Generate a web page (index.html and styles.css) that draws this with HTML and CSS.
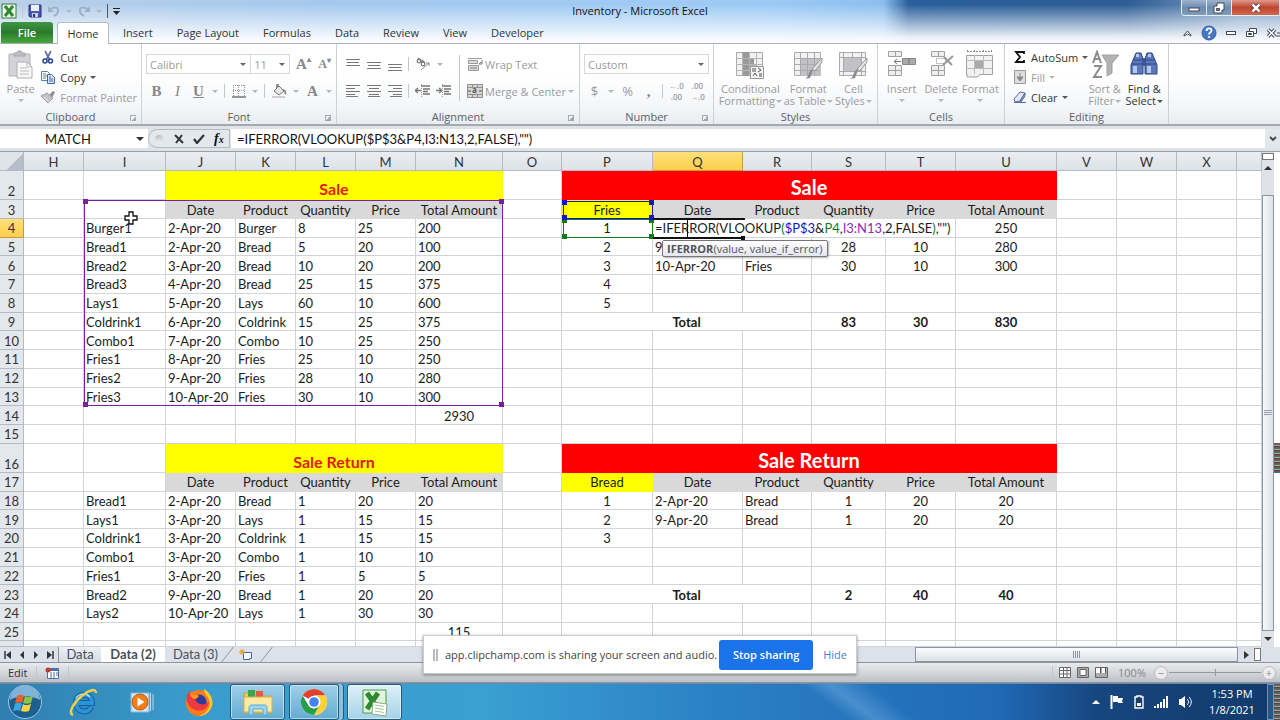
FILE: index.html
```
<!DOCTYPE html>
<html lang="en">
<head>
    <meta charset="UTF-8" />
    <meta name="viewport" content="width=device-width,initial-scale=1" />
    <title>Inventory - Microsoft Excel</title>
    <link rel="stylesheet" href="styles.css">
</head>
<body>
    <header class="top">
        <div class="titlebar">
            <div class="quick">
                <svg width="16" height="16" viewBox="0 0 16 16"><rect x="1" y="1" width="14" height="14" fill="#eef7ea" stroke="#2f7d32"/><path d="M4 3l8 10M12 3L4 13" stroke="#2c8a31" stroke-width="3"/></svg>
                <i class="vbar"></i>
                <button aria-label="Save"><svg width="14" height="14" viewBox="0 0 14 14"><path d="M1 1h12v12H2L1 12z" fill="#4a55b5" stroke="#2b3380"/><path d="M3 1h8v6H3z" fill="#eef1fa"/><path d="M4 9h6v4H4z" fill="#c9cfe6"/><path d="M5 10h2v3H5z" fill="#2b3380"/></svg></button>
                <button aria-label="Undo"><svg width="14" height="12" viewBox="0 0 14 12"><path d="M3 5C6 1 12 2 11 6c0 2-2 4-4 5" fill="none" stroke="#9fb0c6" stroke-width="2"/><path d="M1 1v6h6z" fill="#9fb0c6"/></svg></button>
                <i class="arr pale"></i>
                <button aria-label="Redo"><svg width="14" height="12" viewBox="0 0 14 12"><path d="M11 5C8 1 2 2 3 6c0 2 2 4 4 5" fill="none" stroke="#9fb0c6" stroke-width="2"/><path d="M13 1v6H7z" fill="#9fb0c6"/></svg></button>
                <i class="arr pale"></i>
                <i class="vbar dark"></i>
                <button aria-label="Customize toolbar"><svg width="7" height="7" viewBox="0 0 7 7"><path d="M0 0h7v1H0zM0 3h7L3.500 7z" fill="#222"/></svg></button>
            </div>
            <h1>Inventory - Microsoft Excel</h1>
            <div class="winbtns">
                <button aria-label="Minimize"><svg width="12" height="8" viewBox="0 0 12 8"><rect x="1" y="4" width="10" height="3" fill="#fff" stroke="#445"/></svg></button>
                <button aria-label="Restore"><svg width="12" height="12" viewBox="0 0 12 12"><path d="M4 1h7v7H9v3H1V4h3z" fill="#fff" stroke="#445"/><path d="M3.500 6.500h3v2h-3z" fill="#889" stroke="#445"/></svg></button>
                <button class="close" aria-label="Close"><svg width="12" height="10" viewBox="0 0 12 10"><path d="M2.500 1.500l7 7M9.500 1.500l-7 7" stroke="#522" stroke-width="4"/><path d="M2.500 1.500l7 7M9.500 1.500l-7 7" stroke="#fff" stroke-width="2.500"/></svg></button>
            </div>
        </div>
        <nav class="tabs">
            <button class="file">File</button>
            <button class="active">Home</button>
            <button>Insert</button>
            <button>Page Layout</button>
            <button>Formulas</button>
            <button>Data</button>
            <button>Review</button>
            <button>View</button>
            <button>Developer</button>
            <span class="help">
                <button aria-label="Minimize ribbon"><svg width="9" height="8" viewBox="0 0 9 8"><path d="M1 6l3.500-4L8 6v1L4.500 5 1 7z" fill="#fff" stroke="#445"/></svg></button>
                <button aria-label="Help"><svg width="16" height="16" viewBox="0 0 16 16"><circle cx="8" cy="8" r="7" fill="#4676c4" stroke="#3460a8"/><path d="M5.500 6c0-3.500 5-3.500 5-.5 0 2-2.500 2-2.500 4" fill="none" stroke="#fff" stroke-width="1.800"/><circle cx="8" cy="12" r="1.100" fill="#fff"/></svg></button>
                <button aria-label="Minimize workbook"><svg width="10" height="6" viewBox="0 0 10 6"><rect x=".5" y="1.500" width="9" height="3" fill="#fff" stroke="#445"/></svg></button>
                <button aria-label="Restore workbook"><svg width="12" height="11" viewBox="0 0 12 11"><path d="M4.500 1.500h7v5h-3v3h-7v-5h3z" fill="#fff" stroke="#445"/><path d="M3.500 6.500h3v1h-3zM4.500 4.500h4v2" fill="none" stroke="#445"/></svg></button>
                <button aria-label="Close workbook"><svg width="14" height="10" viewBox="0 0 14 10"><path d="M2 1.500l7 7M9 1.500l-7 7" stroke="#445" stroke-width="3.500"/><path d="M2 1.500l7 7M9 1.500l-7 7" stroke="#fff" stroke-width="1.500"/><path d="M10 8h4M11 5h3" stroke="#445"/></svg></button>
            </span>
        </nav>
    </header>

    <section class="ribbon">
        <div class="group clipboard">
            <div class="tools">
                <button class="big off">
                    <svg width="28" height="30" viewBox="0 0 28 30"><path d="M2 4h21v22H2z" fill="#d3d3d6" stroke="#b4b4b8"/><path d="M7 6V3h3c0-3 5-3 5 0h3v3z" fill="#bdbdc2" stroke="#a5a5aa"/><path d="M10 12h10l5 5v11H10z" fill="#f7f7f8" stroke="#b0b0b4"/><path d="M20 12v5h5M13 18h7M13 21h9M13 24h9" fill="none" stroke="#bbb"/></svg>
                    <span>Paste</span><i class="arr pale"></i>
                </button>
                <div class="stack">
                    <button><svg width="16" height="16" viewBox="0 0 16 16"><path d="M5 2l5 9M11 2L6 11" stroke="#5b6ea8" stroke-width="1.600"/><circle cx="5" cy="12" r="2" fill="none" stroke="#2d4796" stroke-width="1.600"/><circle cx="10.500" cy="12" r="2" fill="none" stroke="#2d4796" stroke-width="1.600"/></svg>Cut</button>
                    <button><svg width="16" height="16" viewBox="0 0 16 16"><path d="M1.500 2.500h6l2 2v7h-8z" fill="#fff" stroke="#5c7fb5"/><path d="M3 5h3M3 7h4M3 9h3" stroke="#5c7fb5"/><path d="M7.500 5.500h4l3 3v6h-7z" fill="#dce8f8" stroke="#3665a8"/><path d="M9 8h2M9 10h4M9 12h4" stroke="#3665a8"/></svg>Copy<i class="arr"></i></button>
                    <button class="off"><svg width="16" height="16" viewBox="0 0 16 16"><path d="M9 6l4-4 2 1-3 6z" fill="#8e8e92"/><path d="M1 7l6-3 6 5-5 5z" fill="#c4c4c8" stroke="#a0a0a4"/><path d="M4 8l5 5" stroke="#eee"/></svg>Format Painter</button>
                </div>
            </div>
            <footer>Clipboard<i class="launch"></i></footer>
        </div>

        <div class="group font">
            <div class="tools rows">
                <div class="line">
                    <label class="combo face"><select aria-label="Font"><option>Calibri</option></select></label>
                    <label class="combo size"><select aria-label="Font size"><option>11</option></select></label>
                    <button class="off serif grow">A<sup>▴</sup></button>
                    <button class="off serif shrink">A<sup>▾</sup></button>
                </div>
                <div class="line">
                    <button class="off serif"><b>B</b></button>
                    <button class="off serif"><em>I</em></button>
                    <button class="off serif"><u>U</u></button>
                    <i class="arr pale"></i><i class="vbar"></i>
                    <button class="off" aria-label="Borders"><svg width="14" height="14" viewBox="0 0 14 14"><path d="M1.500 1v12M6.500 1v12M12.500 1v12M1 1.500h12M1 6.500h12" stroke="#999" stroke-dasharray="1 1"/><path d="M0 13h14" stroke="#777" stroke-width="1.500"/></svg></button>
                    <i class="arr pale"></i><i class="vbar"></i>
                    <button class="off" aria-label="Fill color"><svg width="16" height="15" viewBox="0 0 16 15"><path d="M3 7l5-5 5 5-5 4z" fill="#e6e6e6" stroke="#777"/><path d="M6 4V1h2M12 6c2 0 3 2 2 4" fill="none" stroke="#777" stroke-width="1.500"/><path d="M1 13h13" stroke="#d0d0d0" stroke-width="2"/></svg></button>
                    <i class="arr pale"></i>
                    <button class="off serif">A</button>
                    <i class="arr pale"></i>
                </div>
            </div>
            <footer>Font<i class="launch"></i></footer>
        </div>

        <div class="group align">
            <div class="tools">
                <div class="rows">
                    <div class="line">
                        <button class="off" aria-label="Top align"><svg width="14" height="14" viewBox="0 0 14 14"><path d="M0 2.500h14M1 5.500h12M0 8.500h14" stroke="#777"/></svg></button>
                        <button class="off" aria-label="Middle align"><svg width="14" height="14" viewBox="0 0 14 14"><path d="M0 5.500h14M1 8.500h12M0 11.500h14" stroke="#777"/></svg></button>
                        <button class="off" aria-label="Bottom align"><svg width="14" height="14" viewBox="0 0 14 14"><path d="M0 7.500h14M1 10.500h12M0 13.500h14" stroke="#777"/></svg></button>
                        <i class="vbar"></i>
                        <button class="off" aria-label="Orientation"><svg width="16" height="16" viewBox="0 0 16 16"><circle cx="4" cy="5" r="1.800" fill="none" stroke="#777" stroke-width="1.200"/><path d="M3 2l4 4M7 4l3 3" stroke="#777" stroke-width="1.200"/><circle cx="8" cy="8" r="1.800" fill="none" stroke="#777" stroke-width="1.200"/><path d="M6 14l8-7M11 7h3v3" fill="none" stroke="#888"/></svg></button>
                        <i class="arr pale"></i>
                    </div>
                    <div class="line">
                        <button class="off" aria-label="Align left"><svg width="14" height="12" viewBox="0 0 14 12"><path d="M0 .5h14M0 3.500h9M0 6.500h14M0 9.500h9M0 11.500h12" stroke="#777"/></svg></button>
                        <button class="off" aria-label="Center"><svg width="14" height="12" viewBox="0 0 14 12"><path d="M0 .5h14M2 3.500h10M0 6.500h14M2 9.500h10M1 11.500h12" stroke="#777"/></svg></button>
                        <button class="off" aria-label="Align right"><svg width="14" height="12" viewBox="0 0 14 12"><path d="M0 .5h14M5 3.500h9M0 6.500h14M5 9.500h9M2 11.500h12" stroke="#777"/></svg></button>
                        <i class="vbar"></i>
                        <button class="off" aria-label="Decrease indent"><svg width="15" height="14" viewBox="0 0 15 14"><path d="M6 2h9M8 5h7M8 7.500h5M8 10h7M0 6.500h6M3 4L0 6.500 3 9" fill="none" stroke="#777" stroke-width="1.300"/><path d="M6.500 0v14" stroke="#999" stroke-dasharray="1 1"/></svg></button>
                        <button class="off" aria-label="Increase indent"><svg width="15" height="14" viewBox="0 0 15 14"><path d="M6 2h9M8 5h7M8 7.500h5M8 10h7M0 6.500h6M3 4l3 2.500L3 9" fill="none" stroke="#777" stroke-width="1.300"/><path d="M6.500 0v14" stroke="#999" stroke-dasharray="1 1"/></svg></button>
                    </div>
                </div>
                <i class="vbar tall"></i>
                <div class="rows wrapcol">
                    <div class="line"><button class="off"><svg width="16" height="15" viewBox="0 0 16 15"><path d="M1 1.500h14M1.500 3.500h9v3h-9zM1.500 8.500h10v5h-10z" fill="#ddd" stroke="#999"/><path d="M15 3v4h-3l2-2M3 11h7" fill="none" stroke="#777"/></svg>Wrap Text</button></div>
                    <div class="line"><button class="off"><svg width="16" height="14" viewBox="0 0 16 14"><path d="M.5.5h15v13H.5zM.5 3.500h15M.5 10.500h15M5.500.5v3M10.500.5v3M5.500 10.500v3M10.500 10.500v3" fill="#d6d6d6" stroke="#909090"/><path d="M1 7h3M15 7h-3" stroke="#555"/><text x="5" y="9" font-size="8" font-weight="bold" fill="#555">a</text></svg>Merge &amp; Center<i class="arr pale"></i></button></div>
                </div>
            </div>
            <footer>Alignment<i class="launch"></i></footer>
        </div>

        <div class="group number">
            <div class="tools rows">
                <div class="line"><label class="combo fmt"><select aria-label="Number format"><option>Custom</option></select></label></div>
                <div class="line">
                    <button class="off big-sign">$</button><i class="arr pale"></i>
                    <button class="off big-sign">%</button>
                    <button class="off serif comma">,</button>
                    <i class="vbar"></i>
                    <button class="off dec"><span>←.0</span><span>.00</span></button>
                    <button class="off dec"><span>.00</span><span>→.0</span></button>
                </div>
            </div>
            <footer>Number<i class="launch"></i></footer>
        </div>

        <div class="group styles">
            <div class="tools">
                <button class="big off w66">
                    <svg width="30" height="30" viewBox="0 0 30 30"><path d="M1.500 2.500h26v23h-26z" fill="#f2f2f2" stroke="#aaa"/><path d="M8 2h6v24H8zM14 9h5v5h-5z" fill="#999"/><path d="M14 14h7v6h-7z" fill="#b5b5b5"/><path d="M1 8.500h26M1 14.500h26M1 20.500h26M7.500 2v24M14.500 2v24M21.500 2v24" stroke="#b5b5b5"/><path d="M15.500 16.500h13v12h-13z" fill="#f4f4f4" stroke="#999"/><path d="M18 18v4M20 18v4M23 18l3 2-3 2M18 26l2-3 2 3M24 24h3M24 26h3" fill="none" stroke="#555"/></svg>
                    <span>Conditional</span><span>Formatting<i class="arr pale"></i></span>
                </button>
                <button class="big off w50">
                    <svg width="30" height="30" viewBox="0 0 30 30"><path d="M1.500 2.500h26v23h-26z" fill="#f2f2f2" stroke="#aaa"/><path d="M8 8h20v18H8z" fill="#c2c2c6"/><path d="M1 8.500h26M1 14.500h26M1 20.500h26M7.500 2v24M14.500 2v24M21.500 2v24" stroke="#aaa"/><path d="M29 9l-9 11-3 8-5 1c3-1 3-5 5-8z" fill="#8c8c90"/><path d="M29 8v4l-7 9-3-2z" fill="#e2e2e4" stroke="#999"/></svg>
                    <span>Format</span><span>as Table<i class="arr pale"></i></span>
                </button>
                <button class="big off w40">
                    <svg width="30" height="30" viewBox="0 0 30 30"><path d="M1.500 2.500h26v23h-26z" fill="#f2f2f2" stroke="#aaa"/><path d="M6 7h18v14H6z" fill="#c2c2c6"/><path d="M1 7.500h26M1 21.500h26M5.500 2v24M14.500 2v5M23.500 2v24" stroke="#aaa"/><path d="M29 9l-9 11-3 8-5 1c3-1 3-5 5-8z" fill="#8c8c90"/><path d="M29 8v4l-7 9-3-2z" fill="#e2e2e4" stroke="#999"/></svg>
                    <span>Cell</span><span>Styles<i class="arr pale"></i></span>
                </button>
            </div>
            <footer>Styles</footer>
        </div>

        <div class="group cells">
            <div class="tools">
                <button class="big off w40">
                    <svg width="30" height="30" viewBox="0 0 30 30"><path d="M1.500 1.500h13v5h-13zM8.500 1v5M1.500 15.500h13v10h-13zM8.500 15v10M1 20.500h13" fill="#eee" stroke="#a0a0a4"/><path d="M15.500 8.500h13v6h-13z" fill="#aaa" stroke="#888"/><path d="M22 8v6M7 11.500h7M10 9l-3 2.500 3 2.500" fill="none" stroke="#777"/></svg>
                    <span>Insert</span><i class="arr pale"></i>
                </button>
                <button class="big off w40">
                    <svg width="26" height="30" viewBox="0 0 26 30"><path d="M3.500 1.500h13v5h-13zM10.500 1v5M3.500 15.500h13v10h-13zM10.500 15v10M3 20.500h13" fill="#eee" stroke="#a0a0a4"/><path d="M8.500 8.500h9v5h-9z" fill="#fff" stroke="#888" stroke-dasharray="1 1"/><path d="M16 7l8 8M25 6l-10 9" stroke="#999" stroke-width="2"/></svg>
                    <span>Delete</span><i class="arr pale"></i>
                </button>
                <button class="big off w40">
                    <svg width="30" height="30" viewBox="0 0 30 30"><path d="M1.500 5.500h26v19h-26z" fill="#f2f2f2" stroke="#a0a0a4"/><path d="M10 10h8v9h-8z" fill="#aaa"/><path d="M1 10.500h26M1 18.500h26M9.500 5v19M18.500 5v19" stroke="#bbb"/><path d="M2 1.500h24M2.500 0v3M9.500 0v3M18.500 0v3M26.500 0v3" stroke="#888" stroke-dasharray="2 1"/><path d="M2 24v3h10l4-3" fill="#eee" stroke="#a0a0a4"/></svg>
                    <span>Format</span><i class="arr pale"></i>
                </button>
            </div>
            <footer>Cells</footer>
        </div>

        <div class="group editing">
            <div class="tools">
                <div class="stack">
                    <button><svg width="14" height="14" viewBox="0 0 14 14"><path d="M11 4V2H3l4 5-4 5h8v-2" fill="none" stroke="#111" stroke-width="1.800"/></svg>AutoSum<i class="arr"></i></button>
                    <button class="off"><svg width="14" height="14" viewBox="0 0 14 14"><path d="M1.500.5h11v13h-11z" fill="#ddd" stroke="#999"/><path d="M7 3v5M4 7l3 4 3-4z" fill="#888" stroke="#888"/></svg>Fill<i class="arr pale"></i></button>
                    <button><svg width="14" height="14" viewBox="0 0 14 14"><path d="M1 9l6-7 5 1-5 8-5 1z" fill="#dfe7f8" stroke="#5a6c9c"/><path d="M7 11l5-8v3l-4 6zM1 12.500h12" fill="#8fa2cf" stroke="#5a6c9c"/></svg>Clear<i class="arr"></i></button>
                </div>
                <button class="big off w40">
                    <svg width="30" height="30" viewBox="0 0 30 30"><path d="M12 5h17l-7 8v10l-5 3V13z" fill="#b2b2b6" stroke="#a0a0a4"/><path d="M3 13L7 2l4 11M4 9h6M4 16h7L4 27h8" fill="none" stroke="#8c8c90" stroke-width="2"/></svg>
                    <span>Sort &amp;</span><span>Filter<i class="arr pale"></i></span>
                </button>
                <button class="big w40">
                    <svg width="28" height="30" viewBox="0 0 28 30"><path d="M6 3h5l2 6v15H1V15zM17 3h5l5 12v9H15V9z" fill="#5b78ba" stroke="#2b4684"/><path d="M12 8h4v8h-4z" fill="#3c5898"/><path d="M6 4h3v3H6zM18 4h3v3h-3zM3 16h4v7H3zM17 16h4v7h-4z" fill="#b6c8ee"/><path d="M4 10h9M15 10h9M1 14h12M15 14h12" stroke="#2b4684"/></svg>
                    <span>Find &amp;</span><span>Select<i class="arr"></i></span>
                </button>
            </div>
            <footer>Editing</footer>
        </div>
    </section>

    <section class="formulabar">
        <label class="namebox"><input value="MATCH" aria-label="Name box"><i class="arr black"></i></label>
        <div class="fx">
            <i class="knob"></i>
            <button aria-label="Cancel"><svg width="10" height="10" viewBox="0 0 10 10"><path d="M1 1l8 8M8 1L2 9" stroke="#333" stroke-width="2"/></svg></button>
            <button aria-label="Enter"><svg width="12" height="10" viewBox="0 0 12 10"><path d="M1 5l3 4 7-8" fill="none" stroke="#333" stroke-width="2.200"/></svg></button>
            <button class="fn" aria-label="Insert function"><em>f<small>x</small></em></button>
        </div>
        <input class="formula" aria-label="Formula" value='=IFERROR(VLOOKUP($P$3&amp;P4,I3:N13,2,FALSE),"")'>
        <button class="expand" aria-label="Expand formula bar"><svg width="8" height="6" viewBox="0 0 8 6"><path d="M1 1l3 3 3-3" fill="none" stroke="#444" stroke-width="1.800"/></svg></button>
    </section>

    <main class="sheet">
        <div class="grid">
            <table>
                <colgroup>
                    <col class="w24"><col class="w60"><col class="w82"><col class="w70"><col class="w60"><col class="w60"><col class="w60"><col class="w87"><col class="w59"><col class="w91"><col class="w90"><col class="w69"><col class="w74"><col class="w70"><col class="w101"><col class="w60"><col class="w60"><col class="w60"><col>
                </colgroup>
                <thead>
                    <tr><th class="corner"></th><th>H</th><th>I</th><th>J</th><th>K</th><th>L</th><th>M</th><th>N</th><th>O</th><th>P</th><th class="on">Q</th><th>R</th><th>S</th><th>T</th><th>U</th><th>V</th><th>W</th><th>X</th><th></th></tr>
                </thead>
                <tbody>
                    <tr class="tall"><th>2</th><td></td><td></td><td colspan="5" class="yellow">Sale</td><td></td><td colspan="6" class="red">Sale</td><td></td><td></td><td></td><td></td></tr>
                    <tr class="names"><th>3</th><td></td><td></td><td class="g">Date</td><td class="g">Product</td><td class="g">Quantity</td><td class="g">Price</td><td class="g">Total Amount</td><td></td><td class="key">Fries</td><td class="g">Date</td><td class="g">Product</td><td class="g">Quantity</td><td class="g">Price</td><td class="g">Total Amount</td><td></td><td></td><td></td><td></td></tr>
                    <tr><th class="on">4</th><td></td><td>Burger1</td><td>2-Apr-20</td><td>Burger</td><td>8</td><td>25</td><td>200</td><td></td><td>1</td><td colspan="4" class="edit" contenteditable="true" spellcheck="false">=IFERROR(VLOOKUP<span class="gr">(</span><span class="bl">$P$3</span>&amp;<span class="gr">P4</span>,<span class="pu">I3:N13</span>,2,FALSE<span class="gr">)</span>,"")</td><td class="mid">250</td><td></td><td></td><td></td><td></td></tr>
                    <tr><th>5</th><td></td><td>Bread1</td><td>2-Apr-20</td><td>Bread</td><td>5</td><td>20</td><td>100</td><td></td><td>2</td><td>9</td><td></td><td>28</td><td>10</td><td>280</td><td></td><td></td><td></td><td></td></tr>
                    <tr><th>6</th><td></td><td>Bread2</td><td>3-Apr-20</td><td>Bread</td><td>10</td><td>20</td><td>200</td><td></td><td>3</td><td>10-Apr-20</td><td>Fries</td><td>30</td><td>10</td><td>300</td><td></td><td></td><td></td><td></td></tr>
                    <tr><th>7</th><td></td><td>Bread3</td><td>4-Apr-20</td><td>Bread</td><td>25</td><td>15</td><td>375</td><td></td><td>4</td><td></td><td></td><td></td><td></td><td></td><td></td><td></td><td></td><td></td></tr>
                    <tr><th>8</th><td></td><td>Lays1</td><td>5-Apr-20</td><td>Lays</td><td>60</td><td>10</td><td>600</td><td></td><td>5</td><td></td><td></td><td></td><td></td><td></td><td></td><td></td><td></td><td></td></tr>
                    <tr><th>9</th><td></td><td>Coldrink1</td><td>6-Apr-20</td><td>Coldrink</td><td>15</td><td>25</td><td>375</td><td></td><td colspan="3" class="total">Total</td><td class="total">83</td><td class="total">30</td><td class="total">830</td><td></td><td></td><td></td><td></td></tr>
                    <tr><th>10</th><td></td><td>Combo1</td><td>7-Apr-20</td><td>Combo</td><td>10</td><td>25</td><td>250</td><td></td><td></td><td></td><td></td><td></td><td></td><td></td><td></td><td></td><td></td><td></td></tr>
                    <tr><th>11</th><td></td><td>Fries1</td><td>8-Apr-20</td><td>Fries</td><td>25</td><td>10</td><td>250</td><td></td><td></td><td></td><td></td><td></td><td></td><td></td><td></td><td></td><td></td><td></td></tr>
                    <tr><th>12</th><td></td><td>Fries2</td><td>9-Apr-20</td><td>Fries</td><td>28</td><td>10</td><td>280</td><td></td><td></td><td></td><td></td><td></td><td></td><td></td><td></td><td></td><td></td><td></td></tr>
                    <tr><th>13</th><td></td><td>Fries3</td><td>10-Apr-20</td><td>Fries</td><td>30</td><td>10</td><td>300</td><td></td><td></td><td></td><td></td><td></td><td></td><td></td><td></td><td></td><td></td><td></td></tr>
                    <tr><th>14</th><td></td><td></td><td></td><td></td><td></td><td></td><td class="mid">2930</td><td></td><td></td><td></td><td></td><td></td><td></td><td></td><td></td><td></td><td></td><td></td></tr>
                    <tr><th>15</th><td></td><td></td><td></td><td></td><td></td><td></td><td></td><td></td><td></td><td></td><td></td><td></td><td></td><td></td><td></td><td></td><td></td><td></td></tr>
                    <tr class="tall"><th>16</th><td></td><td></td><td colspan="5" class="yellow">Sale Return</td><td></td><td colspan="6" class="red">Sale Return</td><td></td><td></td><td></td><td></td></tr>
                    <tr class="names"><th>17</th><td></td><td></td><td class="g">Date</td><td class="g">Product</td><td class="g">Quantity</td><td class="g">Price</td><td class="g">Total Amount</td><td></td><td class="key">Bread</td><td class="g">Date</td><td class="g">Product</td><td class="g">Quantity</td><td class="g">Price</td><td class="g">Total Amount</td><td></td><td></td><td></td><td></td></tr>
                    <tr><th>18</th><td></td><td>Bread1</td><td>2-Apr-20</td><td>Bread</td><td>1</td><td>20</td><td>20</td><td></td><td>1</td><td>2-Apr-20</td><td>Bread</td><td>1</td><td>20</td><td>20</td><td></td><td></td><td></td><td></td></tr>
                    <tr><th>19</th><td></td><td>Lays1</td><td>3-Apr-20</td><td>Lays</td><td>1</td><td>15</td><td>15</td><td></td><td>2</td><td>9-Apr-20</td><td>Bread</td><td>1</td><td>20</td><td>20</td><td></td><td></td><td></td><td></td></tr>
                    <tr><th>20</th><td></td><td>Coldrink1</td><td>3-Apr-20</td><td>Coldrink</td><td>1</td><td>15</td><td>15</td><td></td><td>3</td><td></td><td></td><td></td><td></td><td></td><td></td><td></td><td></td><td></td></tr>
                    <tr><th>21</th><td></td><td>Combo1</td><td>3-Apr-20</td><td>Combo</td><td>1</td><td>10</td><td>10</td><td></td><td></td><td></td><td></td><td></td><td></td><td></td><td></td><td></td><td></td><td></td></tr>
                    <tr><th>22</th><td></td><td>Fries1</td><td>3-Apr-20</td><td>Fries</td><td>1</td><td>5</td><td>5</td><td></td><td></td><td></td><td></td><td></td><td></td><td></td><td></td><td></td><td></td><td></td></tr>
                    <tr><th>23</th><td></td><td>Bread2</td><td>9-Apr-20</td><td>Bread</td><td>1</td><td>20</td><td>20</td><td></td><td colspan="3" class="total">Total</td><td class="total">2</td><td class="total">40</td><td class="total">40</td><td></td><td></td><td></td><td></td></tr>
                    <tr><th>24</th><td></td><td>Lays2</td><td>10-Apr-20</td><td>Lays</td><td>1</td><td>30</td><td>30</td><td></td><td></td><td></td><td></td><td></td><td></td><td></td><td></td><td></td><td></td><td></td></tr>
                    <tr><th>25</th><td></td><td></td><td></td><td></td><td></td><td></td><td class="mid">115</td><td></td><td></td><td></td><td></td><td></td><td></td><td></td><td></td><td></td><td></td><td></td></tr>
                    <tr class="cut"><th></th><td></td><td></td><td></td><td></td><td></td><td></td><td></td><td></td><td></td><td></td><td></td><td></td><td></td><td></td><td></td><td></td><td></td><td></td></tr>
                </tbody>
            </table>
            <div class="range purple"><i></i><i></i><i></i><i></i></div>
            <div class="range green"><i></i><i></i><i></i><i></i></div>
            <div class="range blue"><i></i><i></i><i></i><i></i></div>
            <div class="active-cell"></div>
            <div class="hint"><b>IFERROR</b>(value, value_if_error)</div>
            <svg class="cursor" width="14" height="14" viewBox="0 0 14 14"><path d="M5 1h4v4h4v4H9v4H5V9H1V5h4z" fill="#fff" stroke="#111" stroke-width="1.300"/></svg>
        </div>
        <div class="vscroll">
            <i class="split"></i>
            <button aria-label="Scroll up"><i class="up"></i></button>
            <div class="thumb"></div>
            <button aria-label="Scroll down"><i class="arr black"></i></button>
        </div>
        <div class="edge"><i class="noise"></i></div>
    </main>

    <section class="sheettabs">
        <div class="steps">
            <button aria-label="First sheet"><svg width="8" height="8" viewBox="0 0 8 8"><path d="M1 0v8" stroke="#333" stroke-width="1.500"/><path d="M7 0v8L2 4z" fill="#333"/></svg></button>
            <button aria-label="Previous sheet"><svg width="8" height="8" viewBox="0 0 8 8"><path d="M6 0v8L2 4z" fill="#333"/></svg></button>
            <button aria-label="Next sheet"><svg width="8" height="8" viewBox="0 0 8 8"><path d="M2 0v8l4-4z" fill="#333"/></svg></button>
            <button aria-label="Last sheet"><svg width="8" height="8" viewBox="0 0 8 8"><path d="M7 0v8" stroke="#333" stroke-width="1.500"/><path d="M1 0v8l5-4z" fill="#333"/></svg></button>
        </div>
        <button class="tab">Data</button>
        <button class="tab current">Data (2)</button>
        <button class="tab slant">Data (3)</button>
        <button class="tab slant add" aria-label="New sheet"><svg width="14" height="12" viewBox="0 0 14 12"><path d="M4.500 3.500h8v6h-2v1h-6z" fill="#f4f8ff" stroke="#4a6496"/><path d="M3 0v6M0 3h6M1 1l4 4M5 1L1 5" stroke="#e0a020"/></svg></button>
        <div class="hscroll">
            <div class="thumb"><i></i></div>
            <button aria-label="Scroll right"><i class="right"></i></button>
            <i class="split"></i>
        </div>
    </section>

    <section class="status">
        <span class="mode">Edit</span>
        <i class="vbar"></i>
        <button aria-label="Record macro"><svg width="15" height="12" viewBox="0 0 15 12"><path d="M2.500 1.500h11v10h-11z" fill="#fff" stroke="#4b6ea8"/><path d="M3 2h11v2H3z" fill="#4b6ea8"/><path d="M5 6h2M8 6h2M11 6h2M5 8h2M8 8h2M11 8h2M5 10h2M8 10h2" stroke="#4b6ea8"/><circle cx="3" cy="3" r="2.500" fill="#c0392b"/></svg></button>
        <i class="vbar"></i>
        <div class="views">
            <i class="vbar"></i>
            <button aria-label="Normal"><svg width="12" height="11" viewBox="0 0 12 11"><path d="M.5.5h11v10H.5zM.5 3.500h11M.5 7h11M4.500.5v10M8 .5v10" fill="#fff" stroke="#666"/></svg></button>
            <button class="pressed" aria-label="Page layout"><svg width="12" height="11" viewBox="0 0 12 11"><path d="M.5.5h11v10H.5z" fill="#aaa" stroke="#666"/><path d="M3 2.500h6v6H3z" fill="#fff" stroke="#666"/></svg></button>
            <button aria-label="Page break preview"><svg width="13" height="11" viewBox="0 0 13 11"><path d="M.5.5h12v10H.5z" fill="#aaa" stroke="#666"/><path d="M1 1h4v5H1zM7 1h3v5H7z" fill="#fff"/><path d="M5.500 0v6M10.500 0v6" stroke="#555"/></svg></button>
            <button class="pct">100%</button>
            <button class="round" aria-label="Zoom out">−</button>
            <input type="range" min="10" max="190" value="100" aria-label="Zoom">
            <button class="round" aria-label="Zoom in">+</button>
        </div>
    </section>

    <footer class="taskbar">
        <button class="orb" aria-label="Start"><svg width="36" height="36" viewBox="0 0 36 36"><circle cx="18" cy="18" r="16.500" fill="#1e5f92" stroke="#9cc8e4"/><path d="M3 16a15 15 0 0130 0c-8-5-22-5-30 0z" fill="#7fb4d8"/><path d="M10 12c3-2 5-1 7 0l-2 7c-2-1-4-1-7 0z" fill="#e8622c"/><path d="M18 12c3 2 5 1 8 0l-2 7c-3 1-5 1-8 0z" fill="#8cc63f"/><path d="M8 20c3-2 5-1 7 0l-2 7c-2-1-4-1-7 0z" fill="#39a6e6"/><path d="M16 20c3 2 5 1 8 0l-2 7c-3 1-5 1-8 0z" fill="#ffd23f"/></svg></button>
        <button class="pin" aria-label="Internet Explorer"><svg width="32" height="32" viewBox="0 0 32 32"><path d="M9 17h16c0-11-16-11-16 0 0 10 13 11 15 4" fill="none" stroke="#155f9e" stroke-width="6"/><path d="M9 17h16c0-11-16-11-16 0 0 10 13 11 15 4" fill="none" stroke="#2b93d8" stroke-width="4"/><path d="M9 12c3-5 11-5 14-1" fill="none" stroke="#9fdcf8" stroke-width="1.500"/><path d="M6 29c-6-2 2-14 10-20 6-5 13-7 13-2" fill="none" stroke="#f2cf4a" stroke-width="2.500"/></svg></button>
        <button class="pin" aria-label="Media Player"><svg width="26" height="24" viewBox="0 0 26 24"><path d="M3 3h18v19H3z" fill="#cfe3f2" stroke="#8db9d8"/><path d="M22.500 3v18M25 4v16" stroke="#b8d8ec"/><circle cx="12" cy="12" r="8" fill="#ef7d1a" stroke="#c95c08"/><path d="M9.500 7.500v9l7-4.500z" fill="#fff"/></svg></button>
        <button class="pin" aria-label="Firefox"><svg width="30" height="30" viewBox="0 0 30 30"><circle cx="15" cy="16" r="13" fill="#ff7a1a"/><path d="M20 2c8 5 11 14 6 21-3 4-7 6-11 6 9-3 12-10 10-16-1-4-5-6-5-11z" fill="#ffcb2e"/><circle cx="15" cy="15" r="7.500" fill="#2d3a9e"/><path d="M3 8c0 0 2-3 4-4 0 4 4 4 7 4 2 1 0 4-3 4 2 6 9 7 14 3-1 8-10 11-16 7S2 12 3 8z" fill="#ee3a3f"/><path d="M7 4c0 4 4 4 7 4 1 2-1 3-3 4-4-1-6-4-4-8z" fill="#ff9a1f"/></svg></button>
        <button class="app" aria-label="Explorer"><svg width="32" height="30" viewBox="0 0 32 30"><path d="M2 6h9l2 3h16v17H2z" fill="#edc95a" stroke="#c9a23c"/><path d="M6 3h7v8H6z" fill="#3aa64a"/><path d="M14 4h7v7h-7z" fill="#e65b3a"/><path d="M2 10h28v15H2z" fill="#fbe9a4" stroke="#d4b050"/><path d="M7 28v-7c0-2 1-3 3-3h12c2 0 3 1 3 3v7h-4v-6H11v6z" fill="#9bd6f2" stroke="#57a9d4"/></svg></button>
        <button class="app stacked" aria-label="Chrome"><svg width="28" height="28" viewBox="0 0 28 28"><circle cx="14" cy="14" r="13" fill="#fff"/><path d="M14 14L2.700 7.500A13 13 0 0125.300 7.500L14 7.500z" fill="#e0402f"/><path d="M25.300 7.500A13 13 0 0114 27l5.600-9.800a6.500 6.500 0 00-5.600-9.700z" fill="#fdd038"/><path d="M2.700 7.500A13 13 0 0014 27l5.600-9.800a6.500 6.500 0 01-11.200 0z" fill="#2a9d4c"/><circle cx="14" cy="14" r="6.200" fill="#fff"/><circle cx="14" cy="14" r="4.800" fill="#4584f0"/></svg></button>
        <button class="app lit" aria-label="Excel"><svg width="30" height="30" viewBox="0 0 30 30"><path d="M3 3h23v23H3z" fill="#e3f3dc" stroke="#4b9b4f"/><path d="M7 6l11 16M18 6L7 22" stroke="#2d8a33" stroke-width="5"/><path d="M13 15l14 2-1 12-14-2z" fill="#fff" stroke="#7fb07f"/><path d="M15 18l9 1.500M15 21l9 1.500M15 24l9 1.500" stroke="#9cc49c"/></svg></button>
        <div class="tray">
            <button aria-label="Hidden icons"><i class="up white"></i></button>
            <button aria-label="Action center"><svg width="14" height="14" viewBox="0 0 14 14"><path d="M1.500 0v14" stroke="#fff" stroke-width="2"/><path d="M3 1h5v2h5l-1 3 1 2H8V7H3z" fill="#fff"/></svg></button>
            <button aria-label="Battery"><svg width="10" height="14" viewBox="0 0 10 14"><path d="M3 1h4v1h2v11H1V2h2z" fill="#1b3d66" stroke="#fff" stroke-width="1.400"/><path d="M3 8h4v3H3z" fill="#fff"/></svg></button>
            <button aria-label="Network"><svg width="14" height="12" viewBox="0 0 14 12"><path d="M1 12v-2M4 12V8M7 12V6M10 12V3M13 12V0" stroke="#fff" stroke-width="2"/></svg></button>
            <button aria-label="Volume"><svg width="15" height="14" viewBox="0 0 15 14"><path d="M1 4h2l4-3v12l-4-3H1z" fill="#fff"/><path d="M9 4c2 2 2 4 0 6M11 2c3 3 3 7 0 10" fill="none" stroke="#fff"/></svg></button>
            <time>1:53 PM<br>1/8/2021</time>
            <i class="desk"></i>
            <i class="noise"></i>
        </div>
    </footer>

    <div class="share">
        <i class="grip"></i>
        <span>app.clipchamp.com is sharing your screen and audio.</span>
        <button>Stop sharing</button>
        <a href="#">Hide</a>
    </div>
</body>
</html>
```
FILE: styles.css
```
:root {
    --ui: "Open Sans", "Noto Sans", sans-serif;
    --cell: Lato, sans-serif;
    --line: #d0d3d8;
    --head: #e3e8ed;
    --head-line: #b3bac3;
    --off: #9a9a9e;
    --purple: #7a1fa2;
    --blue: #1414c8;
    --green: #117a1c;
}
* {
    box-sizing: border-box;
}
html,
body {
    height: 100%;
    margin: 0;
}
body {
    display: flex;
    flex-direction: column;
    overflow: hidden;
    font-family: var(--ui);
    font-size: 11px;
    color: #333;
    background: #dfe3e8;
}
button,
input,
select {
    font: inherit;
    color: inherit;
    background: none;
    border: 0;
    padding: 0;
    margin: 0;
    outline: none;
}
button {
    display: inline-flex;
    align-items: center;
    justify-content: center;
    white-space: nowrap;
}
svg {
    display: block;
    flex: none;
}
/* small glyphs */
.arr {
    flex: none;
    border: 3px solid transparent;
    border-top-color: #555;
    border-bottom: 0;
}
.arr.pale {
    border-top-color: #b4b6ba;
}
.arr.black {
    border-width: 4px;
    border-top-color: #333;
    border-bottom: 0;
}
.up {
    border: 4px solid transparent;
    border-bottom-color: #333;
    border-top: 0;
}
.up.white {
    border-bottom-color: #fff;
}
.right {
    border: 4px solid transparent;
    border-left: 5px solid #333;
    border-right: 0;
}
.vbar {
    flex: none;
    width: 1px;
    height: 14px;
    background: #c3c7cd;
}
.vbar.dark {
    background: #555;
}
.noise {
    background: repeating-linear-gradient(#8a4a52 0 1px, #2f7f78 1px 2px, #b8a06a 2px 3px, #4a4468 3px 4px);
}

/* title and tabs */
.top {
    flex: none;
    background: linear-gradient(rgba(255, 255, 255, 0) 10%, rgba(250, 252, 255, 0.92) 85%, #fff),
        linear-gradient(90deg, #b9d0e8, #a5c9ee 25%, #9ccaf5 60%, #8dbfee 69%, #2a5f9c 71%, #2d5d94 88%, #7fa0c4 97%);
}
.titlebar {
    display: grid;
    grid-template-columns: 1fr auto 1fr;
    height: 22px;
}
.quick {
    display: flex;
    align-items: center;
    gap: 5px;
    padding-left: 1px;
}
h1 {
    margin: 0;
    font-size: 11px;
    line-height: 22px;
    font-weight: 400;
    color: #111;
}
.winbtns {
    display: flex;
    justify-self: end;
    height: 16px;
    border: 1px solid #e6eef6;
    border-width: 0 0 1px 1px;
    border-radius: 0 0 0 4px;
    overflow: hidden;
}
.winbtns button {
    width: 25px;
    border-right: 1px solid #dfe8f1;
    background: linear-gradient(#9db3cc, #6d8cb0 50%, #7e9cbd);
}
.winbtns .close {
    width: 48px;
    background: linear-gradient(#dc9a8c, #c0452f 50%, #cf6a50);
}
.tabs {
    display: flex;
    height: 22px;
    padding-left: 1px;
    border-bottom: 1px solid #a9adb3;
}
.tabs > button {
    padding: 0 12px;
}
.tabs .file {
    width: 52px;
    margin-right: 4px;
    color: #fff;
    font-weight: 600;
    border-radius: 3px 3px 0 0;
    background: linear-gradient(#3f9443, #2a7a2d 50%, #46a83f);
}
.tabs .active {
    width: 52px;
    height: 22px;
    margin-right: 2px;
    background: #fff;
    border: 1px solid #b7bcc4;
    border-bottom: 0;
    border-radius: 3px 3px 0 0;
}
.help {
    display: flex;
    align-items: center;
    gap: 9px;
    margin-left: auto;
}

/* ribbon */
.ribbon {
    flex: none;
    display: flex;
    height: 82px;
    background: linear-gradient(#fff 40%, #f3f5f7 80%, #e9ecf0);
    border-bottom: 2px solid #a3a9b1;
}
.group {
    display: flex;
    flex-direction: column;
    border-right: 1px solid #ced2d8;
}
.clipboard { width: 142px; }
.font { width: 195px; }
.align { width: 243px; }
.number { width: 134px; }
.styles { width: 164px; }
.cells { width: 127px; }
.editing { width: 164px; }
.tools {
    flex: 1;
    display: flex;
    padding: 3px 4px 0;
}
.group footer {
    position: relative;
    height: 14px;
    line-height: 14px;
    text-align: center;
    color: #5c6066;
}
.launch {
    position: absolute;
    right: 5px;
    top: 5px;
    width: 6px;
    height: 6px;
    border: 1px solid #a3a8b0;
    border-width: 1px 0 0 1px;
    background: linear-gradient(135deg, transparent 50%, #a3a8b0 50%);
}
.off {
    color: var(--off);
}
.big {
    flex-direction: column;
    justify-content: flex-start;
    gap: 0;
    line-height: 12px;
    padding-top: 3px;
}
.big span {
    display: flex;
    align-items: center;
    gap: 1px;
}
.big svg {
    margin-bottom: 3px;
}
.big > .arr {
    margin-top: 4px;
}
.w66 { width: 66px; }
.w50 { width: 52px; }
.w40 { width: 40px; }
.clipboard .big {
    width: 38px;
}
.stack {
    display: flex;
    flex-direction: column;
    align-items: flex-start;
    padding-left: 4px;
}
.clipboard .tools {
    padding-left: 5px;
}
.stack button {
    height: 20px;
    gap: 4px;
}
.rows {
    display: flex;
    flex-direction: column;
    gap: 7px;
}
.tools.rows {
    padding-top: 10px;
}
.tools > .rows {
    padding-top: 7px;
}
.line {
    display: flex;
    align-items: center;
    height: 20px;
    gap: 6px;
}
.line button {
    gap: 3px;
    min-width: 15px;
}
.combo {
    position: relative;
    height: 20px;
    border: 1px solid #d3d6db;
    color: var(--off);
}
.combo::after {
    content: "";
    position: absolute;
    right: 4px;
    top: 8px;
    border: 3px solid transparent;
    border-top-color: #666;
    border-bottom: 0;
}
.combo select {
    width: 100%;
    height: 18px;
    padding-left: 3px;
    appearance: none;
}
.face { width: 106px; }
.size { width: 40px; margin-left: -7px; }
.fmt { width: 126px; }
.serif {
    font-family: "Liberation Serif", serif;
    font-size: 15px;
    font-weight: 700;
    color: #88888c;
}
.serif em {
    font-weight: 400;
}
.serif sup {
    font-size: 8px;
    line-height: 8px;
    align-self: flex-start;
}
.line .serif {
    gap: 0;
}
.shrink {
    font-size: 12px;
}
.font .line + .line,
.number .line + .line {
    padding-left: 3px;
}
.align .line {
    padding-left: 4px;
    gap: 6px;
}
.vbar.tall {
    height: 46px;
    margin: 8px 7px 0 8px;
}
.align .wrapcol .line {
    padding-left: 0;
}
.align .wrapcol button {
    gap: 2px;
}
.big-sign {
    font-size: 13px;
}
.line .dec {
    flex-direction: column;
    gap: 0;
    font-size: 8px;
    line-height: 11px;
    font-weight: 600;
}
.editing .stack {
    width: 76px;
}

/* formula bar */
.formulabar {
    flex: none;
    display: flex;
    height: 26px;
    padding: 3px 0;
    border-bottom: 1px solid #9aa1aa;
    font-family: var(--cell);
    font-size: 13px;
    color: #111;
}
.namebox {
    display: flex;
    align-items: center;
    width: 148px;
    padding-right: 4px;
    background: #fff;
}
.namebox input {
    flex: 1;
    min-width: 0;
    text-align: center;
}
.fx {
    display: flex;
    align-items: center;
    gap: 9px;
    width: 82px;
    margin-right: 1px;
    padding-left: 6px;
    border-radius: 10px 0 0 10px;
    border: 1px solid #b3bac3;
    background: var(--head);
}
.knob {
    width: 8px;
    height: 8px;
    margin-right: 2px;
    border-radius: 50%;
    background: linear-gradient(#b9bfc7, #eef1f4);
}
.fn em {
    font-family: "Liberation Serif", serif;
    font-weight: 700;
    font-size: 14px;
}
.fn small {
    font-size: 10px;
}
.formula {
    flex: 1;
    padding-left: 6px;
    background: #fff;
}
.expand {
    width: 15px;
    background: var(--head);
}

/* sheet */
.sheet {
    flex: 1;
    min-height: 0;
    display: flex;
}
.grid {
    position: relative;
    flex: 1;
    min-width: 0;
    overflow: hidden;
    background: #fff;
}
table {
    width: 100%;
    height: 100%;
    table-layout: fixed;
    border-spacing: 0;
    font-family: var(--cell);
    font-size: 13px;
    line-height: 16px;
    color: #1c1c1c;
}
.w24 { width: 24px; }
.w59 { width: 59px; }
.w60 { width: 60px; }
.w69 { width: 69px; }
.w70 { width: 70px; }
.w74 { width: 74px; }
.w82 { width: 82px; }
.w87 { width: 87px; }
.w90 { width: 90px; }
.w91 { width: 91px; }
.w101 { width: 101px; }
tr {
    height: 18px;
}
tr.tall {
    height: 28px;
}
tr.cut {
    height: 5px;
    line-height: 0;
}
td,
th {
    padding: 1px 2px 0;
    border: 0 solid var(--line);
    border-width: 0 1px 1px 0;
    white-space: nowrap;
    text-align: left;
}
th {
    padding: 1px 0 0;
    text-align: center;
    font-weight: 400;
    color: #333;
    background: var(--head);
    border-color: var(--head-line);
}
thead th {
    height: 19px;
    padding-top: 2px;
    background: linear-gradient(#eaeef2, #dde2e8);
}
.corner {
    background: linear-gradient(135deg, #dfe4ea 60%, #b6bec9 60%);
}
th.on {
    background: linear-gradient(#ffe07a, #fccf4d);
    border-color: #c79a3c;
}
.tall td,
.tall th {
    vertical-align: bottom;
}
td:nth-child(10),
td:nth-child(13),
td:nth-child(14),
td:nth-child(15) {
    text-align: center;
}
.names td,
td.mid,
td.total {
    text-align: center;
}
td.total {
    font-weight: 700;
}
td.g {
    background: #d9d9d9;
    border-color: #d9d9d9;
    padding: 1px 0 0;
}
td.key {
    background: #ff0;
    border-color: #ff0;
}
td.yellow {
    text-align: center;
    background: #ff0;
    border-color: #ff0;
    color: #e01a10;
    font-size: 16px;
    line-height: 20px;
    font-weight: 700;
}
td.red {
    text-align: center;
    background: #f00;
    border-color: #f00;
    color: #fff;
    font-size: 20px;
    line-height: 24px;
    font-weight: 700;
}
td.edit {
    text-align: left;
}
.gr { color: var(--green); }
.bl { color: var(--blue); }
.pu { color: #8a2bc0; }

/* things lying over the cells */
.range {
    position: absolute;
    border: 1px solid;
}
.range i {
    position: absolute;
    width: 5px;
    height: 5px;
    background: currentColor;
}
.range i:nth-child(1) { left: -2px; top: -2px; }
.range i:nth-child(2) { right: -2px; top: -2px; }
.range i:nth-child(3) { left: -2px; bottom: -2px; }
.range i:nth-child(4) { right: -2px; bottom: -2px; }
.purple {
    left: 84px;
    top: 48px;
    width: 419px;
    height: 206px;
    color: var(--purple);
}
.blue {
    left: 563px;
    top: 49px;
    width: 90px;
    height: 18px;
    color: var(--blue);
}
.green {
    left: 563px;
    top: 67px;
    width: 90px;
    height: 19px;
    color: var(--green);
}
.active-cell {
    position: absolute;
    left: 653px;
    top: 66px;
    width: 92px;
    height: 21px;
    border: 2px solid #111;
    border-width: 2px 0;
}
.active-cell::before {
    content: "";
    position: absolute;
    left: 34px;
    top: 0;
    width: 1px;
    height: 17px;
    background: #111;
}
.active-cell::after {
    content: "";
    position: absolute;
    right: 0;
    bottom: -3px;
    width: 4px;
    height: 4px;
    background: #111;
}
.hint {
    position: absolute;
    left: 662px;
    top: 88px;
    padding: 0 4px;
    line-height: 15px;
    color: #555;
    background: linear-gradient(#fff, #e4e5f0);
    border: 1px solid #767676;
    border-radius: 2px;
    box-shadow: 1px 1px 2px rgba(0, 0, 0, 0.3);
}
.cursor {
    position: absolute;
    left: 124px;
    top: 59px;
}
.vscroll {
    width: 12px;
    display: flex;
    flex-direction: column;
    align-items: center;
    background: #dfe3e8;
}
.vscroll .split {
    width: 12px;
    height: 7px;
    margin-top: 1px;
    border: 1px solid #777;
    background: #fff;
}
.vscroll button {
    height: 16px;
}
.vscroll .thumb {
    flex: 1;
    width: 12px;
    margin-top: 19px;
    border: 1px solid #8d949e;
    background: repeating-linear-gradient(#9aa3ae 0 1px, #e8ecf0 1px 2px) center / 8px 6px no-repeat,
        linear-gradient(90deg, #f7f9fb, #dde2e8);
}
.edge {
    width: 6px;
    display: flex;
    align-items: center;
    background: #fff;
}
.edge .noise {
    width: 6px;
    height: 30px;
    margin-top: 116px;
}

/* sheet tabs */
.sheettabs {
    flex: none;
    display: flex;
    height: 16px;
    font-family: var(--cell);
    font-size: 13px;
    line-height: 15px;
    color: #4a4f57;
    background: #dde2ea;
    border-bottom: 1px solid #8d949e;
}
.steps {
    display: flex;
    align-items: center;
    gap: 6px;
    width: 59px;
    padding-left: 4px;
    border-right: 1px solid #8d949e;
}
.tab {
    position: relative;
    width: 42px;
    background: linear-gradient(#eef1f5, #d5dbe3);
}
.tab.current {
    width: 64px;
    font-weight: 700;
    background: #fff;
}
.tab.slant {
    width: 61px;
    background: none;
}
.tab.slant.add {
    width: 39px;
}
.tab.slant::after {
    content: "";
    position: absolute;
    right: -2px;
    top: 0;
    height: 15px;
    border-right: 1px solid #8d949e;
    transform: skewX(-38deg);
}
.hscroll {
    flex: 1;
    display: flex;
    align-items: center;
    justify-content: flex-end;
    padding-right: 19px;
}
.hscroll .thumb {
    display: flex;
    align-items: center;
    justify-content: center;
    width: 323px;
    height: 15px;
    margin-right: 6px;
    border: 1px solid #8d949e;
    background: linear-gradient(#fbfcfd, #dde2e8);
}
.hscroll .thumb i {
    width: 7px;
    height: 7px;
    background: repeating-linear-gradient(90deg, #8d949e 0 1px, transparent 1px 2px);
}
.hscroll .split {
    width: 7px;
    height: 13px;
    margin-left: 5px;
    border: 1px solid #777;
    background: #fff;
}

/* status bar */
.status {
    flex: none;
    display: flex;
    align-items: center;
    gap: 8px;
    height: 20px;
    padding-left: 8px;
    background: linear-gradient(#e9ebee, #cfd2d7 60%, #bdc0c6);
    border-bottom: 1px solid #8d949e;
}
.views {
    display: flex;
    align-items: center;
    gap: 6px;
    margin-left: auto;
    padding-right: 4px;
    color: #888;
}
.pct {
    margin: 0 2px 0 4px;
}
.round {
    width: 14px;
    height: 14px;
    border: 1px solid #bbb;
    border-radius: 50%;
    background: #ececee;
}
.views input {
    appearance: none;
    width: 92px;
    height: 10px;
    margin: 0 -5px;
    background: linear-gradient(#999, #999) center / 100% 1px no-repeat;
}
.views input::-webkit-slider-thumb {
    appearance: none;
    width: 1px;
    height: 7px;
    background: #999;
}

/* taskbar */
.taskbar {
    flex: none;
    display: flex;
    align-items: center;
    height: 37px;
    padding-left: 7px;
    border-top: 1px solid #6d8ba6;
    background: linear-gradient(37deg, transparent 0 64%, rgba(180, 220, 255, 0.25) 66%, transparent 69%),
        linear-gradient(90deg, #2f7fb0, #3a9ccb 15%, #3a9fd2 38%, #2b80c4 56%, #2069b6 78%, #17457d 86%, #123a6b);
}
.pin {
    width: 58px;
}
.orb {
    width: 36px;
    margin-right: 11px;
}
.app {
    width: 55px;
    height: 36px;
    margin-right: 4px;
    border: 1px solid #24587c;
    border-radius: 3px;
    background: linear-gradient(#9fd0e8, #62acd2);
    box-shadow: inset 0 0 0 1px rgba(255, 255, 255, 0.5);
}
.pin + .app {
    margin-left: 2px;
}
.app.stacked {
    width: 50px;
    margin-right: 8px;
    box-shadow: inset 0 0 0 1px rgba(255, 255, 255, 0.5), 4px 0 0 #8cc2de, 5px 0 0 #24587c;
}
.app.lit {
    background: linear-gradient(#dff1f8, #a4d2e8);
}
.tray {
    display: flex;
    align-items: center;
    align-self: stretch;
    gap: 10px;
    margin-left: auto;
    color: #fff;
}
.tray time {
    width: 50px;
    margin-left: 4px;
    text-align: center;
    line-height: 16px;
}
.desk {
    align-self: stretch;
    width: 7px;
    border: 1px solid #6f93b8;
    background: #2a5585;
}
.tray .noise {
    align-self: stretch;
    width: 6px;
    margin-left: -10px;
}

/* screen sharing bar */
.share {
    position: absolute;
    left: 50%;
    bottom: 46px;
    display: flex;
    align-items: center;
    width: 434px;
    height: 39px;
    margin-left: -217px;
    padding: 0 9px;
    background: #fff;
    border: 1px solid #ccc;
    box-shadow: 0 1px 3px rgba(0, 0, 0, 0.4);
    font-size: 11px;
    color: #444;
    white-space: nowrap;
}
.grip {
    width: 5px;
    height: 12px;
    margin-right: 7px;
    border: 1px solid #bbb;
    border-width: 0 2px;
}
.share span {
    flex: 1;
}
.share button {
    width: 94px;
    height: 30px;
    margin-right: 10px;
    border-radius: 3px;
    background: #1a73e8;
    color: #fff;
    font-weight: 600;
}
.share a {
    color: #4a7fd0;
    text-decoration: none;
}
```
